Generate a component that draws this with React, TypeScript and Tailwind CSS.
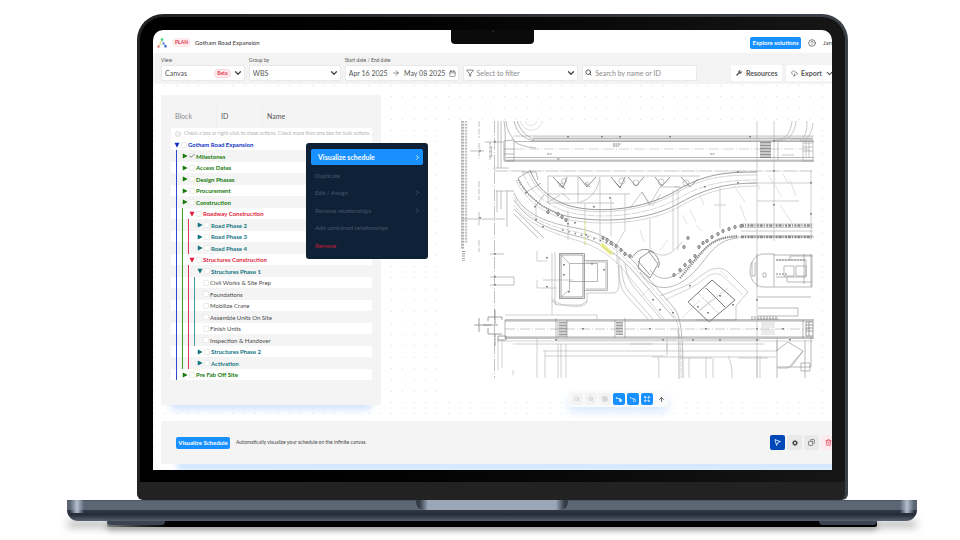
import * as React from 'react';
import {
    ArrowRight,
    ArrowUp,
    Calendar,
    Check,
    ChevronDown,
    ChevronRight,
    CircleHelp,
    CloudDownload,
    Copy,
    Filter,
    Grid3x3,
    Info,
    Search,
    Trash2,
    Wrench,
    ZoomIn,
    ZoomOut,
} from 'lucide-react';

interface TreeItem {
    label: string;
    depth: number;
    open?: boolean;
    checked?: boolean;
}

const tree: TreeItem[] = [
    { label: 'Gotham Road Expansion', depth: 0, open: true },
    { label: 'Milestones', depth: 1, checked: true },
    { label: 'Access Dates', depth: 1 },
    { label: 'Design Phases', depth: 1 },
    { label: 'Procurement', depth: 1 },
    { label: 'Construction', depth: 1 },
    { label: 'Roadway Construction', depth: 2, open: true },
    { label: 'Road Phase 2', depth: 3 },
    { label: 'Road Phase 3', depth: 3 },
    { label: 'Road Phase 4', depth: 3 },
    { label: 'Structures Construction', depth: 2, open: true },
    { label: 'Structures Phase 1', depth: 3, open: true },
    { label: 'Civil Works & Site Prep', depth: 4 },
    { label: 'Foundations', depth: 4 },
    { label: 'Mobilize Crane', depth: 4 },
    { label: 'Assemble Units On Site', depth: 4 },
    { label: 'Finish Units', depth: 4 },
    { label: 'Inspection & Handover', depth: 4 },
    { label: 'Structures Phase 2', depth: 3 },
    { label: 'Activation', depth: 3 },
    { label: 'Pre Fab Off Site', depth: 1 },
];

const guideColors = ['border-[#2f48d0]', 'border-[#3c9a22]', 'border-[#e0384a]', 'border-[#4b9a9c]'];
const textColors = [
    'text-[#0d33c4] font-bold',
    'text-[#177a0a] font-bold',
    'text-[#dc1c36] font-bold',
    'text-[#12747f] font-bold',
    'text-[#4a4a4a]',
];
const indents = ['pl-0', 'pl-0', 'pl-px', 'pl-[3px]', 'pl-[3px]'];

const TreeRow: React.FC<{ item: TreeItem }> = ({ item }) => (
    <li className={`flex items-center odd:h-[11px] even:h-[12px] odd:bg-white ${item.depth === 0 ? 'pl-[3px]' : 'pl-[5px]'}`}>
        {guideColors.slice(0, item.depth).map(color => (
            <span key={color} className={`w-[6px] shrink-0 self-stretch border-l ${color}`} />
        ))}
        <div className={`flex items-center gap-px ${indents[item.depth]} ${textColors[item.depth]}`}>
            {item.depth < 4 && (
                <button type="button" aria-label={`Toggle ${item.label}`}>
                    <svg viewBox="0 0 12 12" className="size-[6px]" fill="currentColor">
                        {item.open ? <path d="M1 1.5h10L6.5 10.5h-1z" /> : <path d="M1.5 1 10.500 5.500v1L1.500 11z" />}
                    </svg>
                </button>
            )}
            <label className="flex items-center gap-px text-[6px] leading-[11px] whitespace-nowrap">
                <span className="relative flex">
                    <input
                        type="checkbox"
                        defaultChecked={item.checked}
                        className="peer size-[6px] appearance-none rounded-[1px] border border-[#ebebeb] bg-white"
                    />
                    <Check className="absolute inset-0 hidden size-[6px] text-[#333] peer-checked:block" strokeWidth={3} />
                </span>
                {item.label}
            </label>
        </div>
    </li>
);

const BlockPanel = () => (
    <section className="w-[220px] shrink-0 rounded-[2px] bg-[#f4f4f4] pr-[9px] pb-[25px] pl-[10px] shadow-[0_14px_8px_-10px_#c9e0fd]">
        <div className="flex h-[33px] pt-[10px] text-[7px] leading-[23px] text-[#555]">
            <span className="w-[45px] pl-[4px] text-[#8c8c8c]">Block</span>
            <span className="w-[46px] border-l border-[#efefef] pl-[4px]">ID</span>
            <span className="flex-1 border-l border-[#efefef] pl-[4px]">Name</span>
        </div>
        <p className="flex h-[11px] items-center gap-[3px] bg-white pl-[4px] text-[5px] whitespace-nowrap text-[#b4b4b4]">
            <Info className="size-[6px] shrink-0" />
            Check a box or right-click to show actions. Check more than one box for bulk actions.
        </p>
        <ul>
            {tree.map(item => (
                <TreeRow key={item.label} item={item} />
            ))}
        </ul>
    </section>
);

const ContextMenu = () => (
    <div className="absolute top-[59px] left-[153px] w-[122px] rounded-[3px] bg-[#0f2137] px-[5px] pt-[6px] pb-[5px] text-[6px] text-[#47566a]">
        <button type="button" className="flex h-[16px] w-full items-center justify-between rounded-[2px] bg-[#1890ff] pr-[2px] pl-[7px] text-[7px] font-bold text-white">
            Visualize schedule
            <ChevronRight className="size-[7px]" strokeWidth={3} />
        </button>
        <div className="flex flex-col pt-px">
            <button type="button" className="h-[18px] pl-[4px] text-left">Duplicate</button>
            <button type="button" className="flex h-[17px] items-center justify-between pr-[2px] pl-[4px]">
                Edit / Assign
                <ChevronRight className="size-[7px]" strokeWidth={3} />
            </button>
            <button type="button" className="flex h-[18px] items-center justify-between pr-[2px] pl-[4px]">
                Remove relationships
                <ChevronRight className="size-[7px]" strokeWidth={3} />
            </button>
            <button type="button" className="h-[17px] pl-[4px] text-left">Add contained relationships</button>
            <button type="button" className="h-[18px] pl-[4px] text-left text-[#c41f35]">Remove</button>
        </div>
    </div>
);

const trees = [
    [566, 220], [562, 217], [558, 214], [548, 212], [603, 238], [607, 240], [611, 243], [616, 246], [621, 250], [625, 254], [630, 256],
    [699, 247], [703, 243], [707, 241], [712, 237], [718, 234], [723, 231], [729, 229], [735, 227], [741, 226],
    [674, 275], [680, 270], [685, 265], [690, 261], [695, 256], [688, 238], [684, 247],
];

const marks = [
    [480, 151], [480, 218], [495, 142], [495, 254], [495, 277], [495, 285], [526, 193], [535, 207], [543, 227], [568, 137], [602, 137],
    [620, 137], [670, 137], [750, 137], [536, 220], [568, 224], [575, 223], [586, 235], [594, 207], [610, 198], [705, 187], [738, 172],
    [738, 183], [774, 141], [774, 171], [774, 205], [811, 183], [811, 214], [547, 258], [547, 287], [583, 329], [650, 329], [706, 329],
    [757, 300], [757, 329], [783, 329], [698, 307], [708, 313], [653, 300], [660, 310], [673, 313], [720, 296], [733, 305], [690, 286],
    [556, 340], [663, 340], [693, 340], [720, 340], [757, 340], [790, 340], [564, 265], [564, 275], [569, 292], [592, 264], [604, 270],
];

const Blueprint = () => (
    <svg viewBox="447 120 373 274" className="w-full bg-white" fill="none" stroke="#a2a2a2" strokeWidth=".6" role="img" aria-label="Road site plan">
        {/* notes and centre lines down the left edge */}
        <g stroke="#999">
            <path d="M462.5 121v128" strokeWidth="3" strokeDasharray=".8 .7" />
            <path d="M466 121v122" strokeWidth="2.4" strokeDasharray=".7 .8" strokeOpacity=".8" />
            <path d="M463.5 251v11" strokeWidth="3" strokeDasharray=".9 1.4" />
            <path d="M490 142v18M491.5 146v12" strokeWidth="1.4" strokeDasharray=".6 .7" />
            <path d="M479 121v17m0 5v16m0 22v19m0 12v14m0 14v12" strokeDasharray="6 1.5" />
            <path d="M494.5 121v257" strokeDasharray="12 2 1 2" />
            <path d="M470 151h14M461 219h44M485 142h18M490 254h14M490 277h24v8h-24M493 168h16" />
            <path d="M498 121v47M501 121v47M497 191v21M501 191v18M507 191v36M496 191h18" />
        </g>
        {/* upper road */}
        <g>
            <path d="M533 136.500h280v4.500H533z" fill="#e2e2e2" stroke="none" />
            <path d="M514 136h300M533 138.500h280M533 141h281" />
            <path d="M514 141.500H814M506 157.500H814" stroke="#888" />
            <path d="M506 161h308" stroke="#777" strokeWidth=".8" />
            <path d="M506 160h308" stroke="#aaa" />
            <path d="M514 149h296" strokeDasharray="10 2 1 2" stroke="#bbb" />
            <path d="M494 171h318" strokeDasharray="14 1 1 1" />
            <path d="M506 121c1 12 6 14 8 20v20h-10v-20l10-1M504 121c2 14 1 16 1 40M514 121c3 14 12 18 20 20M517 121c4 11 10 15 17 19M514 141c4 4 12 6 22 7M504 149h10M504 154h10" stroke="#888" />
            <path d="M520 121c2 8 10 11 16 8 4-2 6-5 6-8M525 121c2 6 10 6 12 0" stroke="#ccc" />
            <path d="M760 142.500h11M760 144h11M760 145.500h11M760 147h11M760 148.500h11M760 150h11M760 151.500h11M760 153h11M760 154.500h11M760 156h11M760 157.500h11" stroke="#777" strokeWidth=".8" />
            <path d="M774 141c14 0 20-5 22-20M774 140c10 0 16-4 18-19M800 141c6-5 7-10 7-20M804 141c6-5 8-10 9-18" />
            <path d="M803 140h10v21h-10zM803 143h10M803 147h10M803 151h10M806 141v16M809 141v16M782 155h12M778 142v18M790 139h12" />
            <path d="M613 144h8M613 146h6M547 154h5M710 154h5M557 159h3" stroke="#888" strokeWidth="1" strokeDasharray="2 .5" />
        </g>
        {/* truss details */}
        <g>
            <path d="M548 176h152M548 176v27h66M578 176v27M548 194h82M548 202l12-7M660 187h20" />
            <path d="M553 177l10 11 4-11M557 181l8 8M579 177l8 10 9-10M585 183l5 4M611 177l9 11 5-11M614 181l7 7M628 177l8 9 8-9M655 177l7 9 8-9M681 177l9 10 8-8" stroke="#888" strokeWidth=".9" />
            <circle cx="564" cy="181" r="2.5" /><circle cx="561" cy="185" r="2" /><circle cx="587" cy="184" r="2" />
            <circle cx="622" cy="181" r="3" /><circle cx="636" cy="183" r="3" /><circle cx="661" cy="182" r="3" /><circle cx="686" cy="183" r="3" />
            <path d="M580 202c10-2 18-12 20-25M570 200l-8-7M630 208l12-16 8 14M642 192l8 12 12-20M652 206l9-12" />
        </g>
        {/* upper curved road */}
        <g stroke="#8a8a8a">
            <path d="M530 170c6 16 18 29 40 36 30 8 74 3 104-14 30-18 50-20 83-20" strokeWidth=".9" />
            <path d="M528 171c6 17 20 30 41 37 30 8 76 3 106-14 28-17 48-19 82-19" stroke="#bbb" />
            <path d="M523 173c6 17 22 32 44 39 34 8 80 4 110-13 26-15 46-19 80-19" stroke="#bbb" strokeDasharray="8 1" />
            <path d="M518 178c8 18 26 32 48 38 36 8 82 4 110-11 26-15 47-22 81-22" strokeWidth=".8" />
            <path d="M516 180c8 18 26 33 49 39 36 8 84 4 112-11 26-15 46-22 80-22" stroke="#bbb" />
            <path d="M518 180l10 14 14 12 16 8" strokeWidth="1.8" strokeDasharray="1 1.5" />
            <path d="M522 172l14 0 2 8M525 193l16-10M535 207l9-12M518 178l10-6" />
        </g>
        {/* lower curved road running to the south-east */}
        <g stroke="#8a8a8a">
            <path d="M514 193c10 22 34 30 62 35 34 6 44 20 60 36l38 44c8 10 9 34 9 70" />
            <path d="M514 200c14 22 38 30 62 36 28 6 42 20 56 34l42 48" />
            <path d="M514 205c12 18 34 26 58 34 30 8 42 20 54 34l38 46" stroke="#bbb" />
            <path d="M514 197c12 22 38 30 62 35 30 6 43 20 58 35l38 44c8 12 9 30 9 67" stroke="#bbb" strokeDasharray="6 1" />
            <path d="M514 209l30 29M514 214l24 24M678 330c1 10 1 30 1 49" />
            <path d="M618 265c2 18 2 22 8 30l22 24M621 265c2 16 3 20 8 27l24 27M625 264c2 12 4 16 8 22l28 33" stroke="#aaa" />
            <path d="M562 230l30 8 24 8" strokeWidth="1.6" strokeDasharray="1.5 5" />
        </g>
        {/* eastern access road lined with trees */}
        <g stroke="#8a8a8a">
            <path d="M650 270c10 14 24 8 36-2 16-14 20-30 48-31h80M640 272c14 22 34 18 50 4 18-16 22-36 48-38" />
            <path d="M680 278l24-28c10-10 18-13 34-14" strokeWidth="2.2" strokeDasharray="1.2 1" />
            <path d="M741 225.500h72M741 237h72" strokeWidth="2.4" strokeDasharray="3 1 1 1.4 2 1" />
            <path d="M741 224h72M741 227.500h72M741 231h72M741 235.500h72" stroke="#aaa" />
            <path d="M650 250c14 10 22 4 32-8M660 296c20-8 28-10 38-18 10-8 20-14 30-6l20 20-12 14v14h-40" stroke="#aaa" />
            <path d="M665 300c20-10 28-12 38-20 8-8 16-8 22-2l18 17" stroke="#bbb" />
        </g>
        <g stroke="#666" strokeWidth=".8" fill="#ccc">
            {trees.map(([x, y]) => (
                <ellipse key={`${x}-${y}`} cx={x} cy={y} rx="1.2" ry="1.6" />
            ))}
        </g>
        {/* highlighted alignment */}
        <path d="M601 244l11 10" stroke="#edf19a" strokeWidth="4" />
        <path d="M602 246l12 9" stroke="#b9be62" />
        <path d="M585 221v25" stroke="#d8df90" strokeWidth="1.2" strokeDasharray="4 1" />
        {/* buildings */}
        <g stroke="#8a8a8a">
            <path d="M559.500 253.500h25v45h-25zM561 255h22v42h-22z" strokeWidth=".8" />
            <path d="M559.500 253.500l10 10v26l-10 9M569.500 263.500h28v18h-28M584.500 260.500h23v30h-23M586 262h20v27h-20" />
            <path d="M555 252v52l4 1h22l6-4v-8h26c6 0 6-6 6-10v-26M552 253v48l5 4M587 301c0 10-34 4-34-2M543 280h30" stroke="#aaa" />
            <path d="M712 280l-24 22 21 20 26-22zM706 288l19 19" stroke="#777" strokeWidth="1" />
            <path d="M688 302l10 10 14-12M698 293l20 20M700 310l28-22" stroke="#aaa" strokeDasharray="4 1" />
            <path d="M640 258l9-6 9 12-8 14-12-10zM638 261l12 14M648 251c8 0 14 12 10 17M632 258c4-8 14-12 22-5" strokeWidth=".9" />
            <path d="M774 254h-12c-16 4-16 30 0 33h50v-32h-38zM757 254v33M774 254v33M752 262v14h3v-14" />
            <path d="M776 260h30v17h-30M784 266h10v10h-10zM796 266h10v10h-10zM790 260v-4h22M787 277v5h24M804 254v30M811 254v33M763 273h3v4h-3z" />
            <path d="M776 260h30M776 274h12" strokeWidth="1.2" strokeDasharray="2 1" />
            <path d="M757 297h54M758 308h40v8h-40M757 319h22M788 342l15 9-12 14-3 3h-10M788 342l-12 9M803 351l-12 16M801 363h9v8h-9zM777 340v38M777 367h34v-30M805 340v38" />
        </g>
        {/* lower road */}
        <g stroke="#888">
            <path d="M505 320h309" stroke="#777" strokeWidth=".9" />
            <path d="M505 321.500h309M505 336.500h309M497 341h316" stroke="#bbb" />
            <path d="M505 338h309" stroke="#777" strokeWidth=".9" />
            <path d="M555 338.500h205v2.500H555z" fill="#ddd" stroke="none" />
            <path d="M505 329h305" strokeDasharray="10 2 1 2" stroke="#aaa" />
            <path d="M558 322v16M567 320v18M556 318v20M615 320v18M625 318v20M505 320v18M803 320v18" />
            <path d="M559 322.500h8M559 324h8M559 325.500h8M559 327h8M559 328.500h8M559 330h8M559 331.500h8M559 333h8M559 334.500h8M559 336h8M616 322.500h7M616 324h7M616 325.500h7M616 327h7M616 328.500h7M616 330h7M616 331.500h7M616 333h7M616 334.500h7" strokeWidth=".8" />
            <path d="M761 323h14M761 325h14M761 327h14M761 330h14M761 332h14M761 334h14" stroke="#bbb" />
            <path d="M806 322h7v14h-7zM806 325h7M806 328h7M806 331h7M809 322v14M752 316v4m3-4v4m3-4v4m3-4v4m3-4v4m3-4v4m3-4v4m3-4v4m3-4v4" strokeWidth=".8" />
            <path d="M488 321v-4h14v3M474 325h24M479 318v14M488 328v6h14M495 310v14M495 334v12M498 336h8v4h-8zM483 325h8" strokeWidth=".8" />
        </g>
        <g stroke="#b0b0b0">
            <path d="M505 315h92v5M552 300v15M513 344h140M543 351h124v-14M545 356h120M545 351v27M667 344h98M667 351h110v-14M630 344h37v12" />
            <path d="M537 338v40M558 344v34M561 344v34M566 344v34M498 340v30M502 340v28M513 370v5M652 357h124M658 357c2 10 0 15 1 21M689 358v20M706 358v20M713 358v20M728 356c4 8 4 16 4 22M738 358h30M757 356v22M760 356v22M680 358h32" />
            <path d="M536 203v17M568 210v30M585 203v18M600 180v60M611 198v38M625 194v36l-8 14v20M650 219v30M673 190v60M678 190v60M674 187h8M720 188v40M714 205h12M757 121v257M774 121v120M811 170v70M757 201h42M750 183h62M537 251v10h10M537 280v8h20" />
        </g>
        {/* ground hatching */}
        <path d="M690 210l6 12M700 195l4 10M733 184l12 18M740 205l6 16M768 175l14 22M783 174l6 10M780 205l12 18M790 180l6 16M760 190l-3-8M696 225l6 6M682 215l5 9M640 230l4 12M720 270l8 8M668 240l-8 10M700 300l-18 18M650 288l-8 8" stroke="#ccc" />
        <g stroke="none" fill="#888">
            {marks.map(([x, y]) => (
                <rect key={`${x}-${y}`} x={x - 1} y={y - 1} width="2" height="1.5" />
            ))}
        </g>
    </svg>
);

const ElbowIcon = ({ dashed }: { dashed?: boolean }) => (
    <svg viewBox="0 0 12 12" className="size-[6px]" fill="none" stroke="currentColor" strokeWidth="1.5">
        <path d="M1 2v3h7v3" strokeDasharray={dashed ? '2 1' : undefined} />
        <path d="M7 7h4v4H7z" fill={dashed ? 'none' : 'currentColor'} strokeWidth="1" />
    </svg>
);

const CanvasTools = () => (
    <div className="ml-[122px] flex h-[16px] w-[99px] items-center gap-[2px] self-start rounded-[3px] bg-[#fafafa] pl-[2px] text-[#c4c4c4] shadow-[0_5px_10px_#dbeafd]">
        <button type="button" aria-label="Zoom out" className="grid size-[12px] place-items-center rounded-[2px] bg-[#f3f3f3]"><ZoomOut className="size-[6px]" /></button>
        <button type="button" aria-label="Zoom in" className="grid size-[12px] place-items-center rounded-[2px] bg-[#f3f3f3]"><ZoomIn className="size-[6px]" /></button>
        <button type="button" aria-label="Grid" className="grid size-[12px] place-items-center rounded-[2px] bg-[#f3f3f3]"><Grid3x3 className="size-[6px]" /></button>
        <button type="button" aria-label="Links" className="grid size-[12px] place-items-center rounded-[2px] bg-[#1890ff] text-white"><ElbowIcon /></button>
        <button type="button" aria-label="Dashed links" className="grid size-[12px] place-items-center rounded-[2px] bg-[#1890ff] text-white"><ElbowIcon dashed /></button>
        <button type="button" aria-label="Fit" className="grid size-[12px] place-items-center rounded-[2px] bg-[#1890ff] text-white">
            <svg viewBox="0 0 12 12" className="size-[6px]" fill="none" stroke="currentColor">
                <path d="M3 3h6v6H3z" strokeOpacity=".8" />
                <path d="M1 1h2v2H1zM9 1h2v2H9zM1 9h2v2H1zM9 9h2v2H9z" fill="currentColor" />
            </svg>
        </button>
        <button type="button" aria-label="Collapse" className="grid size-[12px] place-items-center text-[#555]"><ArrowUp className="size-[7px]" strokeWidth={3} /></button>
    </div>
);

const DotGrid = () => (
    <svg className="absolute inset-0 size-full" aria-hidden="true">
        <pattern id="dots" width="34" height="34" patternUnits="userSpaceOnUse">
            <g fill="#dedede">
                {[0, 11, 23].map(x => [1, 12, 23].map(y => <rect key={`${x}-${y}`} x={x} y={y} width="1" height="1" />))}
            </g>
        </pattern>
        <rect width="100%" height="100%" fill="url(#dots)" />
    </svg>
);

const TopBar = () => (
    <header className="flex h-[23px] items-center pt-[2px] pl-[4px] text-[6px] text-[#444]">
        <svg viewBox="0 0 20 20" className="size-[10px]" fill="none" strokeWidth="2.5">
            <path d="M9 5 4 15" stroke="#f5d98f" />
            <path d="m11 5 5 10" stroke="#a9c4ef" />
            <path d="M6 12h6" stroke="#c8e6b4" />
            <circle cx="10" cy="3" r="2.5" fill="#2fd07a" />
            <rect x="1" y="15" width="4" height="4" fill="#e2574c" />
            <rect x="15" y="14" width="4" height="5" fill="#3358d4" />
            <circle cx="13" cy="11" r="2" fill="#4a7be0" />
        </svg>
        <span className="ml-[5px] w-[19px] rounded-full bg-[#fdeaec] text-center text-[5px] leading-[9px] font-bold text-[#e2384f]">PLAN</span>
        <h1 className="ml-[4px] font-medium">Gotham Road Expansion</h1>
        <button type="button" className="ml-auto h-[12px] w-[51px] rounded-[2px] bg-[#1890ff] text-center font-bold whitespace-nowrap text-white">Explore solutions</button>
        <CircleHelp className="ml-[7px] size-[8px]" />
        <span className="ml-[7px] w-[9px]">Jan</span>
    </header>
);

const field = 'h-[16px] w-full rounded-[2px] border border-[#e9e9e9] bg-white text-[7px]';
const chevron = 'pointer-events-none absolute top-[3px] right-[2px] size-[10px] text-[#444]';

const Toolbar = () => (
    <div className="flex items-end bg-[#f3f3f3] pt-[4px] pb-[3px] pl-[8px] text-[5px] leading-[7px] text-[#555]">
        <form className="mr-[34px] flex min-w-0 flex-1 items-end gap-[4px]">
            <div className="flex-[84_1_0%]">
                <label htmlFor="view">View</label>
                <div className="relative mt-px">
                    <select id="view" className={`${field} appearance-none pl-[3px]`}>
                        <option>Canvas</option>
                    </select>
                    <span className="pointer-events-none absolute top-[4px] right-[14px] w-[17px] rounded-full border border-[#fbd3d8] bg-[#fdeaec] text-center font-bold text-[#e2384f]">Beta</span>
                    <ChevronDown className={chevron} strokeWidth={3} />
                </div>
            </div>
            <div className="flex-[92_1_0%]">
                <label htmlFor="group">Group by</label>
                <div className="relative mt-px">
                    <select id="group" className={`${field} appearance-none pl-[3px]`}>
                        <option>WBS</option>
                    </select>
                    <ChevronDown className={chevron} strokeWidth={3} />
                </div>
            </div>
            <div className="flex-[115_1_0%]">
                <label htmlFor="start">Start date / End date</label>
                <div className={`${field} mt-px flex items-center pr-[2px] pl-[3px]`}>
                    <input id="start" className="w-0 flex-[44]" defaultValue="Apr 16 2025" />
                    <ArrowRight className="size-[8px] shrink-0" />
                    <input aria-label="End date" className="ml-[4px] w-0 flex-[46]" defaultValue="May 08 2025" />
                    <Calendar className="size-[7px] shrink-0" />
                </div>
            </div>
            <div className="relative flex-[115_1_0%]">
                <Filter className="absolute top-[4px] left-[3px] size-[8px] text-[#444]" />
                <select aria-label="Filter" className={`${field} appearance-none pl-[12px] text-[#8a8a8a]`}>
                    <option>Select to filter</option>
                </select>
                <ChevronDown className={chevron} strokeWidth={3} />
            </div>
            <div className="relative flex-[115_1_0%]">
                <Search className="absolute top-[4px] left-[3px] size-[7px] text-[#444]" strokeWidth={3} />
                <input aria-label="Search" placeholder="Search by name or ID" className={`${field} pl-[12px] placeholder:text-[#8a8a8a]`} />
            </div>
        </form>
        <div className="flex shrink-0 gap-[4px] text-[7px] font-bold">
            <button type="button" className="flex h-[16px] w-[51px] items-center gap-[4px] rounded-[2px] bg-white pl-[5px]">
                <Wrench className="size-[6px]" fill="currentColor" />
                Resources
            </button>
            <button type="button" className="flex h-[16px] w-[46px] items-center gap-[3px] rounded-l-[2px] bg-white pl-[5px]">
                <CloudDownload className="size-[7px] shrink-0" />
                Export
                <ChevronDown className="size-[9px] shrink-0" strokeWidth={3} />
            </button>
        </div>
    </div>
);

const ActionBar = () => (
    <footer className="flex h-[43px] items-center rounded-l-[2px] bg-[#f4f4f4] pl-[15px] shadow-[14px_10px_6px_-2px_#d6e8fd]">
        <button type="button" className="h-[12px] w-[54px] rounded-[2px] bg-[#1890ff] text-center text-[6px] font-bold whitespace-nowrap text-white">Visualize Schedule</button>
        <p className="ml-[6px] text-[5px] text-[#444]">Automatically visualize your schedule on the infinite canvas.</p>
        <div className="-mr-[4px] ml-auto flex gap-[2px] text-[#444]">
            <button type="button" aria-label="Select" className="grid size-[15px] place-items-center rounded-[2px] bg-[#0047b8] text-white">
                <svg viewBox="0 0 12 12" className="size-[7px]" fill="none" stroke="currentColor" strokeWidth="1.4" strokeLinejoin="round">
                    <path d="M1.500 1 11 4.500 6.500 6 4.500 11z" />
                </svg>
            </button>
            <button type="button" aria-label="Settings" className="grid size-[15px] place-items-center rounded-[2px] bg-[#e9e9e9]">
                <svg viewBox="0 0 12 12" className="size-[6px]" fill="none" stroke="currentColor">
                    <circle cx="6" cy="6" r="3.5" strokeWidth="2.5" />
                    <circle cx="6" cy="6" r="5" strokeWidth="1.6" strokeDasharray="2 1.93" />
                </svg>
            </button>
            <button type="button" aria-label="Copy" className="grid size-[15px] place-items-center rounded-[2px] bg-[#e9e9e9]"><Copy className="size-[7px] -scale-x-100" /></button>
            <button type="button" aria-label="Delete" className="grid size-[15px] place-items-center rounded-[2px] bg-[#fdeaec] text-[#e2384f]"><Trash2 className="size-[7px]" /></button>
        </div>
    </footer>
);

const Screen = () => (
    <div className="relative overflow-hidden rounded-t-[10px] bg-white">
        <TopBar />
        <Toolbar />
        <main className="relative pt-[11px] pb-[6px] pl-[8px]">
            <DotGrid />
            <div className="relative flex flex-col gap-[16px]">
                <div className="flex">
                    <BlockPanel />
                    <div className="-mb-[2px] flex min-w-0 flex-1 flex-col pt-[25px] pr-[12px] pl-[66px]">
                        <Blueprint />
                        <div className="-mt-[3px] flex">
                            <CanvasTools />
                        </div>
                    </div>
                </div>
                <ActionBar />
            </div>
            <ContextMenu />
        </main>
        <div className="absolute inset-x-0 top-0 flex justify-center">
            <div className="flex h-[14px] w-[83px] justify-center rounded-b-[4px] bg-[#0b0b0c]">
                <span className="size-[2px] rounded-full bg-[#1e2c3c]" />
            </div>
        </div>
    </div>
);

const LaptopBase = () => (
    <div className="relative">
        <div className="absolute inset-x-0 bottom-0 h-[6px] rounded-full bg-[#0005] blur-[4px]" />
        <div className="relative flex h-[21px] justify-center overflow-hidden rounded-b-[11px] bg-linear-to-b from-[#4c5664] via-[#262c38] via-70% to-[#5a6573]">
            <div className="absolute inset-x-0 top-px h-[9px] bg-linear-to-b from-[#5c6775] to-[#5a6675]" />
            <div className="absolute top-0 left-[3px] h-[13px] w-[14px] bg-linear-to-r from-transparent via-[#b4c0cf] to-transparent" />
            <div className="absolute top-0 right-[3px] h-[13px] w-[14px] bg-linear-to-r from-transparent via-[#b4c0cf] to-transparent" />
            <div className="relative flex h-[10px] w-[152px] justify-between overflow-hidden rounded-b-[7px] bg-[#9aa7b9]">
                <div className="w-[12px] bg-linear-to-r from-[#343c48] from-30% to-[#9aa7b9]" />
                <div className="w-[12px] bg-linear-to-l from-[#343c48] from-30% to-[#9aa7b9]" />
            </div>
        </div>
        <div className="relative mx-[40px] flex h-[6px] justify-between rounded-b-[2px] bg-linear-to-r from-[#3338] via-black via-8% to-black to-92% shadow-[0_3px_6px_#0005]">
            <div className="h-[4px] w-[58px] rounded-b-full bg-[#3a4452]" />
            <div className="h-[4px] w-[58px] rounded-b-full bg-[#3a4452]" />
        </div>
    </div>
);

const App = () => (
    <div className="min-h-screen overflow-hidden bg-white pt-[14px] pr-[43px] pb-[13px] pl-[67px] font-['Lato',sans-serif]">
        <div className="mr-[69px] ml-[70px] rounded-t-[26px] rounded-b-[6px] bg-linear-to-r from-[#202224] to-[#3b4049] px-[3px] pt-[3px]">
            <div className="rounded-t-[23px] bg-linear-to-r from-black via-[#060606] to-[#161616] px-[13px] pt-[13px] pb-[12px]">
                <Screen />
            </div>
            <div className="h-[18px] rounded-b-[6px] bg-[#222]" />
        </div>
        <LaptopBase />
    </div>
);

export default App;
